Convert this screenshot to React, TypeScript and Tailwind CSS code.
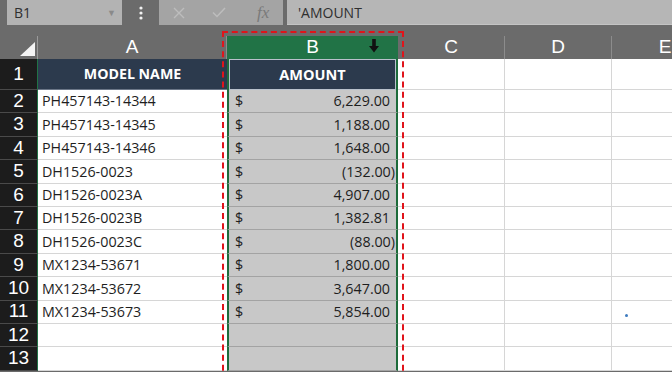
const ROWS: { model: string; amount: string; neg?: boolean }[] = [
  { model: "PH457143-14344", amount: "6,229.00" },
  { model: "PH457143-14345", amount: "1,188.00" },
  { model: "PH457143-14346", amount: "1,648.00" },
  { model: "DH1526-0023", amount: "(132.00)", neg: true },
  { model: "DH1526-0023A", amount: "4,907.00" },
  { model: "DH1526-0023B", amount: "1,382.81" },
  { model: "DH1526-0023C", amount: "(88.00)", neg: true },
  { model: "MX1234-53671", amount: "1,800.00" },
  { model: "MX1234-53672", amount: "3,647.00" },
  { model: "MX1234-53673", amount: "5,854.00" },
  { model: "", amount: "" },
  { model: "", amount: "" },
];

const font = { fontFamily: '"Open Sans", "Liberation Sans", sans-serif' };

function RowNum({ n, tall }: { n: number; tall?: boolean }) {
  return (
    <div
      className={`flex w-[38px] shrink-0 items-center justify-center border-b border-r border-b-[#4a4a4a] border-r-[#217346] bg-[#1c1c1c] text-[19px] text-white ${
        tall ? "h-[31px]" : "h-[23.4px]"
      }`}
      style={{ fontFamily: '"Liberation Sans", Arial, sans-serif' }}
    >
      {n}
    </div>
  );
}

function EmptyCells() {
  return (
    <>
      <div className="h-full w-[107px] shrink-0 border-b border-r border-[#d6d6d6] bg-white" />
      <div className="h-full w-[107px] shrink-0 border-b border-r border-[#d6d6d6] bg-white" />
      <div className="h-full flex-1 border-b border-[#d6d6d6] bg-white" />
    </>
  );
}

export default function App() {
  return (
    <div className="relative h-[372px] w-[672px] overflow-hidden bg-[#6b6b6b]" style={font}>
      {/* formula bar */}
      <div className="flex h-[36px] items-start">
        <div className="ml-[7px] flex h-[25px] w-[115px] items-center justify-between bg-[#b3b3b3] pl-[7px] pr-[6px] text-[14px] text-[#2f2f2f]">
          <span>B1</span>
          <span className="text-[9px] text-[#8a8a8a]">▼</span>
        </div>
        <div className="flex h-[25px] w-[37px] items-center justify-center">
          <svg width="4" height="14" viewBox="0 0 4 14">
            <circle cx="2" cy="2" r="1.6" fill="#f2f2f2" />
            <circle cx="2" cy="7" r="1.6" fill="#f2f2f2" />
            <circle cx="2" cy="12" r="1.6" fill="#f2f2f2" />
          </svg>
        </div>
        <div className="flex h-[25px] w-[124px] items-center bg-[#a4a4a4]">
          <svg className="ml-[14px]" width="12" height="12" viewBox="0 0 12 12">
            <path d="M1 1L11 11M11 1L1 11" stroke="#bdbdbd" strokeWidth="1.4" />
          </svg>
          <svg className="ml-[27px]" width="14" height="11" viewBox="0 0 14 11">
            <path d="M1 5.5L5 9.5L13 1" stroke="#bdbdbd" strokeWidth="1.5" fill="none" />
          </svg>
          <span
            className="ml-[31px] text-[17px] italic text-[#7a7a7a]"
            style={{ fontFamily: '"Liberation Serif", serif' }}
          >
            fx
          </span>
        </div>
        <div className="ml-[4px] flex h-[25px] flex-1 items-center border-b border-[#c4c4c4] bg-[#b6b6b6] pl-[11px] text-[14px] text-[#2f2f2f]">
          'AMOUNT
        </div>
      </div>

      {/* column headers */}
      <div
        className="flex h-[23px] text-[19px] text-white"
        style={{ fontFamily: '"Liberation Sans", Arial, sans-serif' }}
      >
        <div className="relative w-[38px] shrink-0 border-r border-[#9a9a9a]">
          <svg className="absolute left-[20px] top-[6px]" width="15" height="14" viewBox="0 0 15 14">
            <path d="M15 0L15 14L0 14Z" fill="#f4f4f4" />
          </svg>
        </div>
        <div className="flex w-[189px] shrink-0 items-center justify-center border-r border-[#8c8c8c]">A</div>
        <div className="relative flex w-[171px] shrink-0 items-center justify-center bg-[#217346]">
          B
          <svg className="absolute right-[19px] top-[3px]" width="10" height="14" viewBox="0 0 10 14">
            <path d="M3.2 0H6.8V7H10L5 13.5L0 7H3.2Z" fill="#111" />
          </svg>
        </div>
        <div className="flex w-[107px] shrink-0 items-center justify-center border-r border-[#8c8c8c]">C</div>
        <div className="flex w-[107px] shrink-0 items-center justify-center border-r border-[#8c8c8c]">D</div>
        <div className="flex flex-1 items-center justify-center pl-[46px]">E</div>
      </div>

      {/* row 1 */}
      <div className="flex h-[31px]">
        <RowNum n={1} tall />
        <div className="flex w-[189px] shrink-0 items-center justify-center border-b border-[#6b7687] bg-[#2c3a4d] text-[14.2px] font-bold text-white">
          MODEL NAME
        </div>
        <div className="flex w-[171px] shrink-0 items-center justify-center border-x-2 border-x-[#1d6b3a] bg-[#2c3a4d] text-[14.5px] font-bold text-white">
          <div className="flex h-full w-full items-center justify-center border border-[#b9c1cc]">AMOUNT</div>
        </div>
        <EmptyCells />
      </div>

      {/* data rows */}
      {ROWS.map((r, i) => (
        <div key={i} className="flex h-[23.4px]">
          <RowNum n={i + 2} />
          <div className="flex w-[189px] shrink-0 items-center border-b border-[#d6d6d6] bg-white pl-[4px] text-[14.3px] text-[#1e1e1e]">
            {r.model}
          </div>
          <div className="flex w-[171px] shrink-0 items-center border-x-2 border-b border-x-[#1d6b3a] border-b-[#a3a3a3] bg-[#c8c8c8] text-[14.3px] text-[#1e1e1e]">
            {r.amount && <span className="pl-[6px]">$</span>}
            <span className={`ml-auto ${r.neg ? "pr-[1px]" : "pr-[6px]"}`}>{r.amount}</span>
          </div>
          <EmptyCells />
        </div>
      ))}

      {/* selection marquee */}
      <div className="pointer-events-none absolute left-[222px] top-[31px] h-[360px] w-[182px] border-[2px] border-dashed border-[#e0141b]" />
      {/* stray dot */}
      <div className="absolute left-[625px] top-[314px] h-[3px] w-[3px] rounded-full bg-[#3d7bbf]" />
    </div>
  );
}
